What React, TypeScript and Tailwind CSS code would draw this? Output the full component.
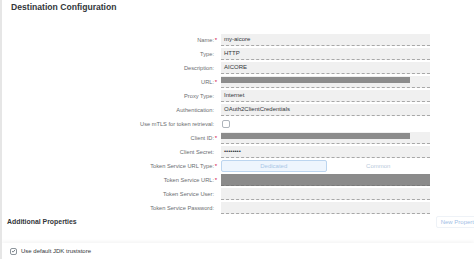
const FONT = "font-['Liberation_Sans',Arial,sans-serif]";

type Field = {
  label: string;
  required?: boolean;
  value?: string;
  redact?: "partial" | "full";
  kind?: "input" | "checkbox" | "segmented";
};

const FIELDS: Field[] = [
  { label: "Name:", required: true, value: "my-aicore" },
  { label: "Type:", value: "HTTP" },
  { label: "Description:", value: "AICORE" },
  { label: "URL:", required: true, redact: "partial" },
  { label: "Proxy Type:", value: "Internet" },
  { label: "Authentication:", value: "OAuth2ClientCredentials" },
  { label: "Use mTLS for token retrieval:", kind: "checkbox" },
  { label: "Client ID:", required: true, redact: "partial" },
  { label: "Client Secret:", value: "••••••••" },
  { label: "Token Service URL Type:", required: true, kind: "segmented" },
  { label: "Token Service URL:", required: true, redact: "full" },
  { label: "Token Service User:" },
  { label: "Token Service Password:" },
];

function FieldControl({ f }: { f: Field }) {
  if (f.kind === "checkbox") {
    return <span className="ml-[1px] block size-[8px] rounded-[2px] border border-[#aeb5bc] bg-white" />;
  }
  if (f.kind === "segmented") {
    return (
      <div className="flex h-[12px] w-[209px]">
        <div className="flex flex-1 items-center justify-center rounded-[2px] border border-[#bcd5ef] bg-[#eef5fd] text-[6px] text-[#a9c6e6]">
          Dedicated
        </div>
        <div className="flex flex-1 items-center justify-center rounded-[2px] bg-white text-[6px] text-[#b9c9da]">
          Common
        </div>
      </div>
    );
  }
  if (f.redact === "full") {
    return <div className="h-[12px] w-[209px] border-b border-dashed border-[#7a7a7a] bg-[#8b8b8b]" />;
  }
  return (
    <div className="relative flex h-[12px] w-[209px] items-center border-b border-dashed border-[#a8a8a8] bg-[#f0f0f0] px-[3px] text-[6px] text-[#32363a]">
      {f.value}
      {f.redact === "partial" && (
        <span className="absolute left-0 top-[1px] h-[6px] w-[189px] bg-[#8c8c8c]" />
      )}
    </div>
  );
}

export default function App() {
  return (
    <div className={`${FONT} relative h-[259px] w-[474px] overflow-hidden border-l-2 border-[#e6e6e6] bg-white`}>
      <h1 className="pl-[9px] pt-[2px] text-[8.6px] font-bold leading-[11px] text-[#32363a]">
        Destination Configuration
      </h1>

      <div className="mt-[20px] flex flex-col">
        {FIELDS.map((f) => (
          <div key={f.label} className="flex h-[14px] items-center">
            <div className="flex w-[217px] shrink-0 items-center justify-end pr-[1px] text-[5.7px] text-[#6a6d70]">
              <span>{f.label}</span>
              <span className={`w-[4px] text-center text-[6px] ${f.required ? "text-[#d0004a]" : "text-transparent"}`}>*</span>
            </div>
            <div className="pl-[2px]">
              <FieldControl f={f} />
            </div>
          </div>
        ))}
      </div>

      <div className="mt-[1px] flex items-center justify-between pl-[5px]">
        <h2 className="text-[6.9px] font-bold text-[#32363a]">Additional Properties</h2>
        <button className="-mr-[8px] h-[12px] rounded-[2px] border border-[#eef2f7] px-[4px] text-[6px] text-[#9fc0e6]">
          New Property
        </button>
      </div>

      <div className="absolute bottom-0 left-0 right-0 flex h-[16px] items-center gap-[4px] pl-[8px] shadow-[0_-2px_3px_rgba(0,0,0,0.04)]">
        <span className="flex size-[7px] items-center justify-center rounded-[2px] border border-[#8d959c] bg-white">
          <svg viewBox="0 0 10 10" className="size-[6px]">
            <path d="M2 5.2 L4.2 7.3 L8 2.8" fill="none" stroke="#3f4a55" strokeWidth="1.4" />
          </svg>
        </span>
        <span className="text-[6px] text-[#32363a]">Use default JDK truststore</span>
      </div>
    </div>
  );
}
